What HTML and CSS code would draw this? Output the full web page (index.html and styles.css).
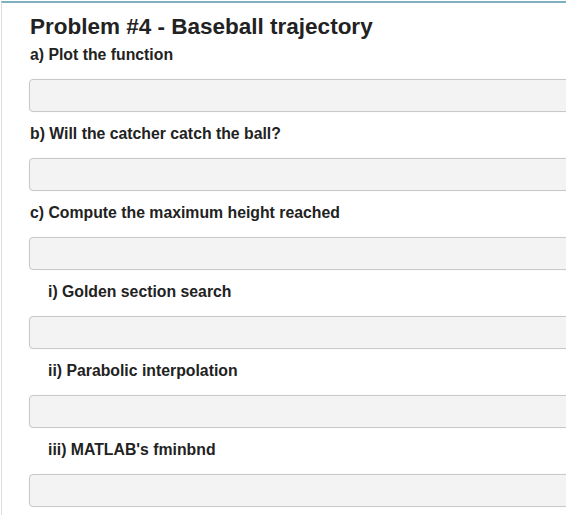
FILE: index.html
```html
<!DOCTYPE html>
<html lang="en">
<head>
    <meta charset="UTF-8">
    <title>Problem #4 - Baseball trajectory</title>
    <link rel="stylesheet" href="styles.css">
</head>
<body>
    <div class="page">
        <h2>Problem #4 - Baseball trajectory</h2>
        <div class="question">
            <label>a) Plot the function</label>
            <div class="answer"></div>
        </div>
        <div class="question">
            <label>b) Will the catcher catch the ball?</label>
            <div class="answer"></div>
        </div>
        <div class="question">
            <label>c) Compute the maximum height reached</label>
            <div class="answer"></div>
        </div>
        <div class="question sub">
            <label>i) Golden section search</label>
            <div class="answer"></div>
        </div>
        <div class="question sub">
            <label>ii) Parabolic interpolation</label>
            <div class="answer"></div>
        </div>
        <div class="question sub">
            <label>iii) MATLAB's fminbnd</label>
            <div class="answer"></div>
        </div>
    </div>
</body>
</html>
```
FILE: styles.css
```css
body {
    margin: 0;
    font-family: "Liberation Sans", Arial, sans-serif;
    color: #222;
    overflow: hidden;
}
.page {
    margin-top: 1px;
    margin-left: 1px;
    border-top: 2px solid #7fb0c2;
    border-left: 1px solid #ddd;
    padding: 10px 0 0 27px;
    height: 600px;
    overflow: hidden;
}
h2 {
    font-size: 22.5px;
    font-weight: bold;
    margin: 0 0 4px 1px;
    line-height: 28px;
}
.question label {
    display: block;
    font-size: 15.8px;
    font-weight: bold;
    line-height: 20px;
    margin: 0 0 14px 1px;
}
.question {
    margin-bottom: 12px;
}
.question.sub label {
    margin-left: 19px;
}
.answer {
    height: 31px;
    width: 600px;
    border: 1px solid #c8c8c8;
    border-radius: 4px;
    background-color: #f3f3f3;
    box-shadow: 0 0 2px rgba(0, 0, 0, 0.06);
}
```
